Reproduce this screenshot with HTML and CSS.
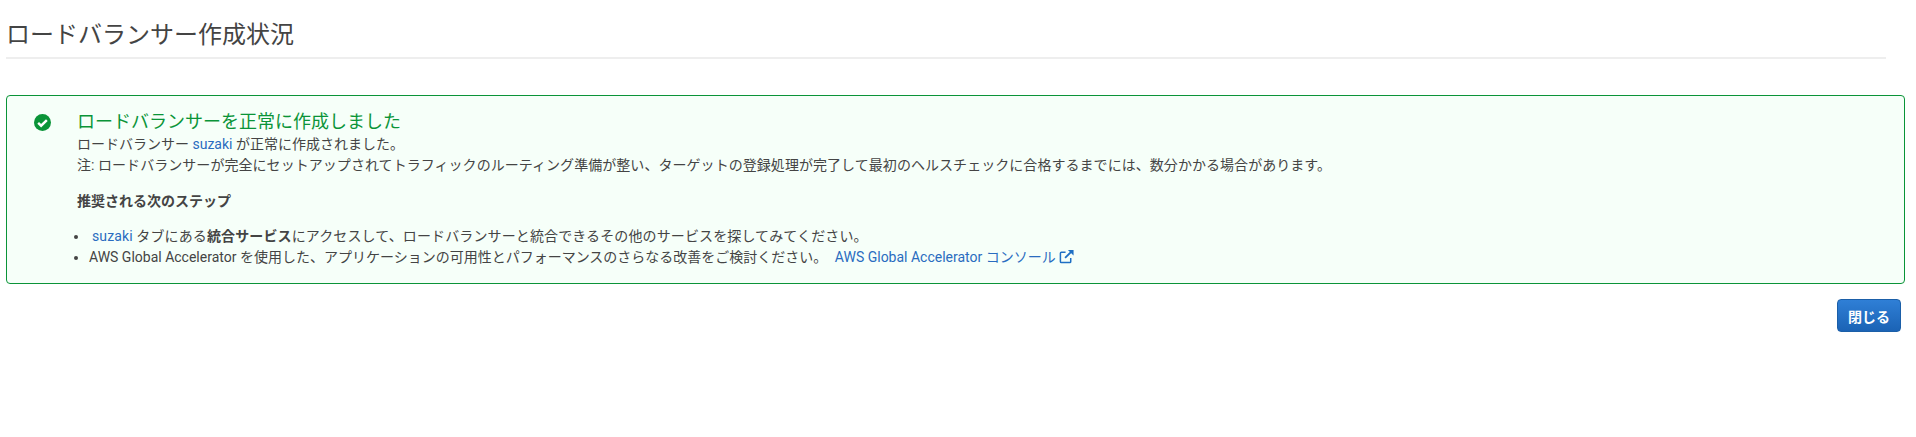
FILE: index.html
```html
<!DOCTYPE html>
<html lang="ja">
<head>
<meta charset="UTF-8">
<title>ロードバランサー作成状況</title>
<link rel="stylesheet" href="styles.css">
</head>
<body>

<div class="page">
  <h1 class="page-title">ロードバランサー作成状況</h1>

  <div class="alert">
    <svg class="alert-icon" viewBox="0 0 16 16" width="17" height="17">
      <circle cx="8" cy="8" r="8" fill="#0a9438"/>
      <path d="M3.9 8.3 L6.7 11 L12.1 5.7" fill="none" stroke="#fff" stroke-width="2.3"/>
    </svg>
    <div class="alert-body">
      <div class="alert-title">ロードバランサーを正常に作成しました</div>
      <div class="alert-text">ロードバランサー <a href="#">suzaki</a> が正常に作成されました。</div>
      <div class="alert-note">注: ロードバランサーが完全にセットアップされてトラフィックのルーティング準備が整い、ターゲットの登録処理が完了して最初のヘルスチェックに合格するまでには、数分かかる場合があります。</div>
      <div class="next-title">推奨される次のステップ</div>
      <ul class="next-list">
        <li class="next-first"><a class="first-link" href="#">suzaki</a> タブにある<b>統合サービス</b>にアクセスして、ロードバランサーと統合できるその他のサービスを探してみてください。</li>
        <li>AWS Global Accelerator を使用した、アプリケーションの可用性とパフォーマンスのさらなる改善をご検討ください。 <a class="console-link" href="#">AWS Global Accelerator コンソール
          <svg class="external" viewBox="0 0 16 16" width="15" height="15">
            <path d="M12.5 9.5 V13.5 Q12.5 14.5 11.5 14.5 H2.5 Q1.5 14.5 1.5 13.5 V4.5 Q1.5 3.5 2.5 3.5 H7" fill="none" stroke="#1f6fc4" stroke-width="1.6"/>
            <path d="M6.5 9.5 L13.5 2.5" fill="none" stroke="#1f6fc4" stroke-width="2"/>
            <path d="M9.5 1 H15.5 V7 Z" fill="#1f6fc4"/>
          </svg></a></li>
      </ul>
    </div>
  </div>

  <div class="actions">
    <button class="btn-primary">閉じる</button>
  </div>
</div>

</body>
</html>
```

FILE: styles.css
```css
/* ELB creation status page */
body {
  margin: 0;
  background: #fff;
  color: #444;
  font-family: Roboto, "Noto Sans CJK JP", sans-serif;
  font-size: 14px;
  line-height: 21px;
}

.page {
  padding: 0 11px 0 6px;
}

.page-title {
  margin: 0 19px 0 0;
  padding: 20px 0 6px;
  border-bottom: 2px solid #eee;
  font-size: 24px;
  line-height: 31px;
  font-weight: 400;
  color: #444;
}

.alert {
  display: flex;
  margin-top: 36px;
  padding: 15px 20px 15px 27px;
  height: 189px;
  box-sizing: border-box;
  background: #f6fff9;
  border: 1px solid #0a9438;
  border-radius: 4px;
}

.alert-icon {
  flex: none;
  margin: 3px 26px 0 0;
}

.alert-title {
  font-size: 18px;
  line-height: 22px;
  color: #0a9438;
}

.alert-text {
  margin-top: 1px;
}

.alert-note {
  letter-spacing: 0.05px;
}

a {
  color: #2a6cc0;
  text-decoration: none;
}

.next-title {
  margin-top: 15px;
  font-weight: 700;
}

.next-list {
  margin: 14px 0 0;
  padding-left: 12px;
}

.next-first {
  letter-spacing: 0.12px;
}

.first-link {
  margin-left: 3px;
}

.console-link {
  margin-left: 4px;
}

.external {
  vertical-align: -2px;
}

.actions {
  display: flex;
  justify-content: flex-end;
  margin-top: 15px;
  padding-right: 4px;
}

.btn-primary {
  width: 64px;
  height: 33px;
  padding: 0;
  border: 1px solid #1b5fa8;
  border-radius: 4px;
  background: linear-gradient(#2f7fd6, #1b63b5);
  color: #fff;
  font-family: inherit;
  font-size: 14px;
  font-weight: 700;
}
```
